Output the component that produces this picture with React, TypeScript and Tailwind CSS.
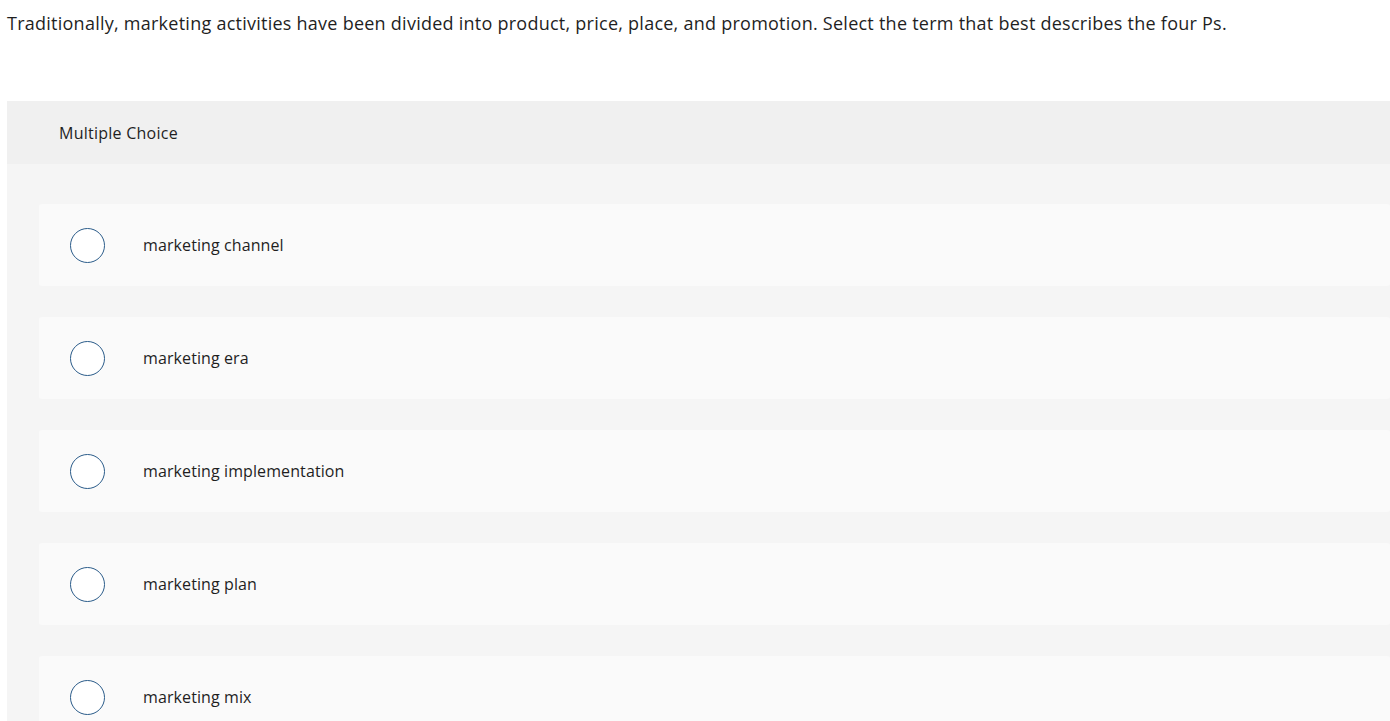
import React from "react";

const options = [
  "marketing channel",
  "marketing era",
  "marketing implementation",
  "marketing plan",
  "marketing mix",
];

const App = () => {
  return (
    <div className="h-[721px] overflow-hidden bg-white text-[#1f1f1f] font-['Open_Sans','Liberation_Sans',sans-serif]">
      <p className="pl-[7px] pt-[11px] text-[18px] leading-[24px] tracking-[0.25px]">
        Traditionally, marketing activities have been divided into product, price, place, and promotion. Select the term that best describes the four Ps.
      </p>

      <div className="ml-[7px] mt-[66px] bg-[#f5f5f5]">
        <div className="h-[63px] bg-[#f0f0f0] pl-[52px] flex items-center text-[16px] tracking-[0.25px]">
          Multiple Choice
        </div>
        <div className="pl-[32px] pt-[40px] flex flex-col gap-[31px]">
          {options.map((opt) => (
            <div key={opt} className="h-[82px] rounded-[3px] bg-[#fafafa] flex items-center">
              <span className="ml-[31px] w-[35px] h-[35px] rounded-full border-[1.5px] border-[#2b5c8a] bg-white shrink-0" />
              <span className="ml-[38px] text-[16px] tracking-[0.1px]">{opt}</span>
            </div>
          ))}
        </div>
      </div>
    </div>
  );
};

export default App;
